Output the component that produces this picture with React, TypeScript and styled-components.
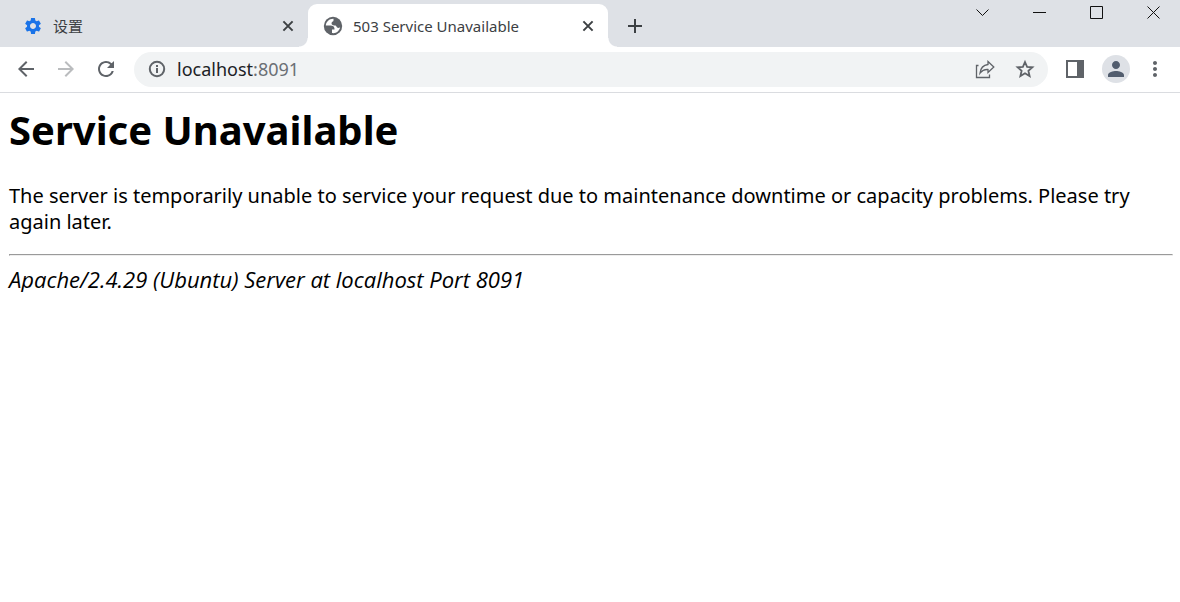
import React from "react";
import styled, { createGlobalStyle } from "styled-components";
import {
  MdArrowBack,
  MdArrowForward,
  MdMoreVert,
  MdPerson,
  MdRefresh,
  MdSettings,
} from "react-icons/md";

const GlobalStyle = createGlobalStyle`
  * { box-sizing: border-box; }
  body {
    margin: 0;
    background: #fff;
    font-family: "Noto Sans", "Noto Sans CJK SC", sans-serif;
  }
  button {
    border: 0;
    padding: 0;
    background: transparent;
    font: inherit;
    color: inherit;
    display: flex;
    align-items: center;
    justify-content: center;
  }
  svg { display: block; flex: none; }
`;

const TabStrip = styled.header`
  display: flex;
  align-items: flex-start;
  height: 47px;
  padding: 4px 4px 0 8px;
  background: #dee1e6;
`;

const TabList = styled.div`
  display: flex;
`;

const Tab = styled.div<{ $active?: boolean }>`
  position: relative;
  display: flex;
  align-items: center;
  width: 300px;
  height: 43px;
  padding: 0 10px 0 15px;
  border-radius: 9px 9px 0 0;
  background: ${(p) => (p.$active ? "#fff" : "transparent")};
  color: #3c4043;

  &::before,
  &::after {
    content: "";
    display: ${(p) => (p.$active ? "block" : "none")};
    position: absolute;
    bottom: 0;
    width: 9px;
    height: 9px;
  }
  &::before {
    right: 100%;
    background: radial-gradient(circle at 0 0, transparent 8px, #fff 9px);
  }
  &::after {
    left: 100%;
    background: radial-gradient(circle at 100% 0, transparent 8px, #fff 9px);
  }
`;

const TabTitle = styled.button`
  flex: 1;
  gap: 10px;
  justify-content: flex-start;
  font-size: 15px;
  line-height: 20px;
  white-space: nowrap;
`;

const TabClose = styled.button`
  width: 20px;
  height: 20px;
`;

const NewTab = styled.button`
  width: 28px;
  height: 28px;
  margin: 8px 0 0 13px;
  color: #3c4043;
`;

const WindowControls = styled.div`
  display: flex;
  gap: 12px;
  margin-left: auto;
`;

const WindowButton = styled.button`
  width: 45px;
  height: 17px;
  color: #111;
`;

const Toolbar = styled.nav`
  display: flex;
  align-items: center;
  height: 46px;
  padding: 0 13px 1px 14px;
  border-bottom: 1px solid #dadce0;
  color: #5f6368;
`;

const NavButtons = styled.div`
  display: flex;
  gap: 16px;
`;

const IconButton = styled.button`
  width: 24px;
  height: 24px;

  &:disabled { color: #babcbe; }
`;

const Omnibox = styled.div`
  display: flex;
  flex: 1;
  align-items: center;
  gap: 8px;
  height: 35px;
  margin: 1px 0 0 16px;
  padding: 0 11px 1px;
  border-radius: 18px;
  background: #f1f3f4;
`;

const Address = styled.button`
  flex: 1;
  justify-content: flex-start;
  font-size: 18px;
  line-height: 24px;
  color: #202124;
`;

const Port = styled.span`
  color: #6b6f74;
`;

const OmniboxActions = styled.div`
  display: flex;
  gap: 16px;
`;

const ToolbarActions = styled.div`
  display: flex;
  align-items: center;
  gap: 13px;
  margin-left: 15px;
`;

const Avatar = styled.button`
  width: 28px;
  height: 28px;
  margin-left: 2px;
  border-radius: 50%;
  background: #dee1e6;
  color: #525d6e;
`;

const Page = styled.main`
  padding: 8px 7px 0 9px;
  color: #000;
  font-size: 20px;
  line-height: 26px;
`;

const Heading = styled.h1`
  margin: 0;
  font-size: 40px;
  line-height: 58px;
  font-weight: 700;
`;

const Message = styled.p`
  margin: 24px 0 19px;
`;

const Rule = styled.hr`
  height: 2px;
  margin: 0;
  border: 1px solid;
  border-color: #9a9a9a #eee #eee #9a9a9a;
`;

const Signature = styled.address`
  margin-top: 10px;
  font-family: "Open Sans", "Noto Sans", sans-serif;
  font-size: 22px;
  font-style: italic;
`;

const CrossIcon = () => (
  <svg width="12" height="12" viewBox="0 0 12 12" stroke="currentColor" strokeWidth="2">
    <path d="M1.4 1.4 10.6 10.6M10.6 1.4 1.4 10.6" />
  </svg>
);

const GlobeIcon = () => (
  <svg width="20" height="20" viewBox="0 0 20 20">
    <circle cx="10" cy="10" r="9.2" fill="#5f6368" />
    <path
      d="M10.500 2.800C6.500 2.600 3.200 5.600 2.800 9.400H7.500C10 9.400 11.500 10.600 11.500 12.800V13.500H9V17C13 17.800 16.500 14.800 17.100 11.200 16.500 11.800 15.500 12 14.800 11.800 13.600 11.500 13.500 9.600 12.600 9.400H11C9 9.400 8.300 8 8.600 6.800 9 5.600 10.500 5.800 10.500 4.600Z"
      fill="#fff"
    />
  </svg>
);

const PlusIcon = () => (
  <svg width="16" height="16" viewBox="0 0 16 16" stroke="currentColor" strokeWidth="2">
    <path d="M8 1v14M1 8h14" />
  </svg>
);

const InfoIcon = () => (
  <svg width="18" height="18" viewBox="0 0 18 18" fill="none" stroke="currentColor" strokeWidth="2">
    <circle cx="9" cy="9" r="7.2" />
    <path d="M9 8v5M9 5v2" />
  </svg>
);

const ShareIcon = () => (
  <svg width="22" height="20" viewBox="0 0 22 20" fill="none" stroke="currentColor" strokeWidth="1.3">
    <path d="M4.500 6.500H2.500V18.500H15.500V15.500" />
    <path d="M14 2.500 19.800 8 14 13.500V10.500C10.500 10.300 8 11.500 6 14.200 6.500 9.500 9.200 6 14 5.500Z" />
  </svg>
);

const StarIcon = () => (
  <svg width="20" height="20" viewBox="0 0 20 20" fill="none" stroke="currentColor" strokeWidth="1.800">
    <path d="M10 3 12.100 7.900 17.400 8.300 13.400 11.800 14.600 17 10 14.200 5.400 17 6.600 11.800 2.600 8.300 7.900 7.900Z" />
  </svg>
);

const SidePanelIcon = () => (
  <svg width="18" height="18" viewBox="0 0 18 18">
    <path d="M0 0h18v18H0ZM2 2v14h9V2Z" fill="currentColor" fillRule="evenodd" />
  </svg>
);

const WindowGlyph = ({ d }: { d: string }) => (
  <svg width="13" height="13" viewBox="0 0 13 13" fill="none" stroke="currentColor">
    <path d={d} />
  </svg>
);

export default function App() {
  return (
    <>
      <GlobalStyle />
      <TabStrip>
        <TabList>
          <Tab>
            <TabTitle>
              <MdSettings size={20} color="#1a73e8" />
              设置
            </TabTitle>
            <TabClose aria-label="Close tab"><CrossIcon /></TabClose>
          </Tab>
          <Tab $active>
            <TabTitle>
              <GlobeIcon />
              503 Service Unavailable
            </TabTitle>
            <TabClose aria-label="Close tab"><CrossIcon /></TabClose>
          </Tab>
        </TabList>
        <NewTab aria-label="New tab"><PlusIcon /></NewTab>
        <WindowControls>
          <WindowButton aria-label="Search tabs"><WindowGlyph d="M.5 3.500 6.500 9.500 12.500 3.500" /></WindowButton>
          <WindowButton aria-label="Minimize"><WindowGlyph d="M0 6.500H13" /></WindowButton>
          <WindowButton aria-label="Maximize"><WindowGlyph d="M.5.5H12.500V12.500H.5Z" /></WindowButton>
          <WindowButton aria-label="Close"><WindowGlyph d="M.5.5 12.500 12.500M12.500.5.5 12.500" /></WindowButton>
        </WindowControls>
      </TabStrip>
      <Toolbar>
        <NavButtons>
          <IconButton aria-label="Back"><MdArrowBack size={24} /></IconButton>
          <IconButton aria-label="Forward" disabled><MdArrowForward size={24} /></IconButton>
          <IconButton aria-label="Reload"><MdRefresh size={24} /></IconButton>
        </NavButtons>
        <Omnibox>
          <IconButton aria-label="Site information"><InfoIcon /></IconButton>
          <Address>
            <span>localhost<Port>:8091</Port></span>
          </Address>
          <OmniboxActions>
            <IconButton aria-label="Share"><ShareIcon /></IconButton>
            <IconButton aria-label="Bookmark"><StarIcon /></IconButton>
          </OmniboxActions>
        </Omnibox>
        <ToolbarActions>
          <IconButton aria-label="Side panel"><SidePanelIcon /></IconButton>
          <Avatar aria-label="Profile"><MdPerson size={24} /></Avatar>
          <IconButton aria-label="Menu"><MdMoreVert size={24} /></IconButton>
        </ToolbarActions>
      </Toolbar>
      <Page>
        <Heading>Service Unavailable</Heading>
        <Message>
          The server is temporarily unable to service your request due to maintenance downtime or
          capacity problems. Please try again later.
        </Message>
        <Rule />
        <Signature>Apache/2.4.29 (Ubuntu) Server at localhost Port 8091</Signature>
      </Page>
    </>
  );
}
